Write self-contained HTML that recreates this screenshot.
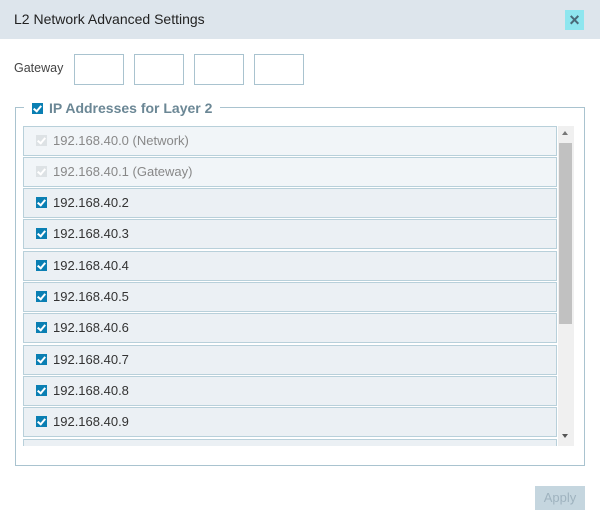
<!DOCTYPE html>
<html><head><style>
*{box-sizing:border-box;margin:0;padding:0}
body{width:600px;height:516px;background:#fff;font-family:"Liberation Sans",sans-serif;position:relative;overflow:hidden;color:#333}
.hdr{position:absolute;left:0;top:0;width:600px;height:39px;background:#dde5ec}
.hdr .t{position:absolute;left:14px;top:11px;font-size:14px;color:#222}
.x{position:absolute;left:565px;top:10px;width:19px;height:20px;background:#8ee6ef;color:#4a6a78;font-size:18px;font-weight:bold;text-align:center;line-height:20px}
.gl{position:absolute;left:14px;top:61px;font-size:12.5px;color:#444}
.gb{position:absolute;top:54px;width:50px;height:31px;border:1px solid #a9c3cf}
.fs{position:absolute;left:15px;top:107px;width:570px;height:359px;border:1px solid #a9c3cf}
.lg{position:absolute;left:24px;top:98px;background:#fff;padding:0 8px;font-size:14px;color:#6b8795;font-weight:bold;height:20px;line-height:20px}
.cb{display:inline-block;width:11px;height:11px;background:#0a7fb3;vertical-align:-1px;margin-right:6px;position:relative}
.cb:after{content:"";position:absolute;left:3px;top:1px;width:3px;height:6px;border:solid #fff;border-width:0 2px 2px 0;transform:rotate(40deg)}
.cb.d{background:#dde2e5}
.row{position:absolute;left:23px;width:534px;height:30px;border:1px solid #b8d0da;background:#ebf0f4;font-size:13px;line-height:28px;padding-left:12px;color:#333}
.row.dis{background:#f1f5f8;color:#888}
.sb{position:absolute;left:558px;top:126px;width:16px;height:320px;background:#f0f0f0}
.th{position:absolute;left:559px;top:143px;width:13px;height:181px;background:#c1c1c1}
.ap{position:absolute;left:535px;top:486px;width:50px;height:24px;background:#c5d6df;color:#9fb3bf;font-size:13px;text-align:center;line-height:24px}
</style></head><body>
<div class="hdr"><div class="t">L2 Network Advanced Settings</div><div class="x">×</div></div>
<div class="gl">Gateway</div>
<div class="gb" style="left:74px"></div><div class="gb" style="left:134px"></div><div class="gb" style="left:194px"></div><div class="gb" style="left:254px"></div>
<div class="fs"></div>
<div class="lg"><span class="cb"></span>IP Addresses for Layer 2</div>
<div class="row dis" style="top:126px"><span class="cb d"></span>192.168.40.0 (Network)</div>
<div class="row dis" style="top:157px"><span class="cb d"></span>192.168.40.1 (Gateway)</div>
<div class="row" style="top:188px"><span class="cb"></span>192.168.40.2</div>
<div class="row" style="top:219px"><span class="cb"></span>192.168.40.3</div>
<div class="row" style="top:251px"><span class="cb"></span>192.168.40.4</div>
<div class="row" style="top:282px"><span class="cb"></span>192.168.40.5</div>
<div class="row" style="top:313px"><span class="cb"></span>192.168.40.6</div>
<div class="row" style="top:345px"><span class="cb"></span>192.168.40.7</div>
<div class="row" style="top:376px"><span class="cb"></span>192.168.40.8</div>
<div class="row" style="top:407px"><span class="cb"></span>192.168.40.9</div>
<div class="row" style="top:439px;height:7px;border-bottom:none"></div>
<div class="sb"></div><div class="th"></div>
<div style="position:absolute;left:562px;top:131px;width:0;height:0;border:3.5px solid transparent;border-bottom:4px solid #777;border-top:none"></div>
<div style="position:absolute;left:562px;top:434px;width:0;height:0;border:3.5px solid transparent;border-top:4px solid #555;border-bottom:none"></div>
<div class="ap">Apply</div>
</body></html>
